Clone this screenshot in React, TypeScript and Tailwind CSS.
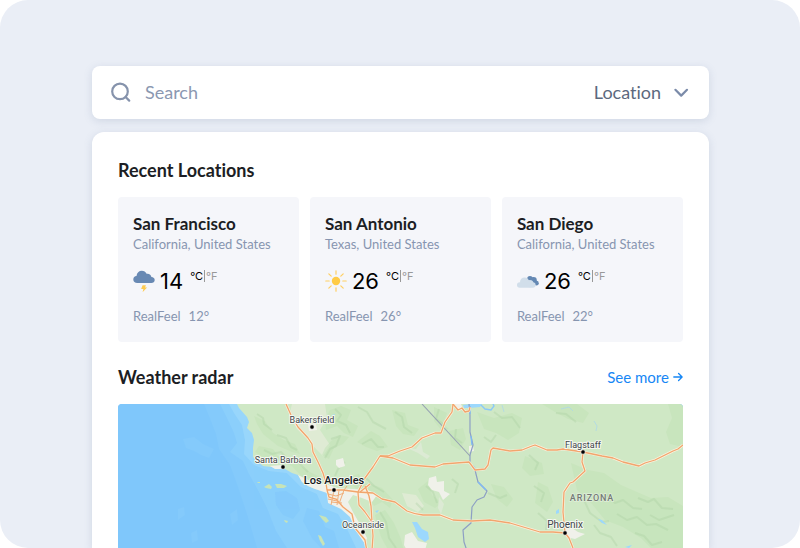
import React, { useState } from "react";

type Weather = "storm" | "sun" | "cloud";

const locations: { city: string; region: string; weather: Weather; temp: number; feel: number }[] = [
    { city: "San Francisco", region: "California, United States", weather: "storm", temp: 14, feel: 12 },
    { city: "San Antonio", region: "Texas, United States", weather: "sun", temp: 26, feel: 26 },
    { city: "San Diego", region: "California, United States", weather: "cloud", temp: 26, feel: 22 },
];

const roads = [
    "M168 0L173 11L180 23L190 34L194 40L195 48L200 58L205 69L208 79L209 86",
    "M209 86L225 86L240 88L255 89L264 95L277 98L289 107Q296 110 305 111L322 111L335 116L354 117L372 116L392 119L422 128L435 128L447 129",
    "M240 88L247 74L255 63L262 52L270 52L282 47L294 43L304 34L317 29L323 29L327 18L334 8L335 0",
    "M262 52L275 54L292 61L317 63L325 60L351 58L357 66L367 65L370 61L373 46L375 44L392 47L404 46L414 42L417 41L429 46L439 46L445 45L465 48L484 52L495 54L505 58L521 62L527 59L537 56L555 47L560 45L565 41",
    "M465 48L464 58L467 67L455 78L452 79L446 88L445 108L447 129L451 134L455 144L462 158",
    "M335 0L340 6L344 4L347 8L351 7L352 3",
    "M209 86L211 93L218 95L225 103L234 110L237 124L247 136L251 160",
    "M240 88L241 101L247 108L254 118L255 132L253 160",
    "M247 82L251 92L253 102L254 118",
    "M252 80L247 84L242 88",
];

const cityStreets = [
    "M210 90L218 92L226 89",
    "M213 98L224 99",
    "M216 86L213 101",
    "M221 86L219 101",
    "M226 86L221 100",
    "M210 95L219 97",
    "M226 86L229 82",
];

const hills = [
    "M136 12L147 17L155 29L166 36L177 40L182 50L174 48L160 42L145 30L139 20Z",
    "M141 42L155 45L160 52L177 58L190 67L202 73L205 82L194 78L184 73L174 62L159 56L146 54L137 48Z",
    "M212 6L223 2L233 6L229 16L240 22L235 33L226 29L219 22L208 26L207 16Z",
    "M213 37L222 31L231 33L225 40L216 44L211 55L204 51L207 44Z",
    "M239 38L253 27L262 32L270 43L259 47L248 43Z",
    "M229 73L241 70L245 79L253 80L264 84L275 96L272 104L264 98L256 102L249 91L237 84Z",
    "M257 111L267 106L276 119L283 135L287 152L273 151L263 133Z",
    "M274 6L287 9L290 21L301 25L296 32L285 30L278 22Z",
    "M316 3L329 9L325 20L331 25L324 27L316 17Z",
    "M331 27L345 24L348 35L342 46L333 41Z",
    "M359 8L376 14L394 9L404 14L401 29L390 36L378 29L366 25Z",
    "M424 0L459 0L471 9L465 19L450 15L437 8Z",
    "M453 59L470 66L486 69L503 81L519 88L533 94L550 93L565 102L565 150L537 148L523 134L505 123L487 116L474 100L459 86Z",
    "M420 78L430 83L435 98L429 108L417 99Z",
    "M550 0L565 0L565 43L552 40L548 28L554 14Z",
    "M407 52L424 59L426 70L412 72L404 64Z",
    "M373 80L386 83L395 95L389 103L379 95Z",
    "M300 85L310 77L314 91L324 99L317 104L306 98Z",
];

const ridges =
    "M139 10L145 14L146 20L154 26M159 31L168 34L173 43L179 46M146 46L154 50L163 48L171 57L181 59L190 68M217 5L223 11L219 17L228 21L232 29M213 35L222 32L218 42L212 45L207 54M240 3L249 8L255 18L268 25M227 58L220 65L217 72M244 40L253 35L260 43L266 43M229 74L239 78L249 75L256 82L266 88M262 108L268 118L271 134L278 144M277 8L284 13L286 23L294 29M321 5L318 15L327 21M338 25L337 34L344 39M376 8L384 14L394 13L402 24M366 33L373 38L378 31M308 82L315 88L319 99M298 99L305 106M334 75L340 80L337 89M370 89L382 94L389 91M411 51L420 59L417 66M438 9L448 10L458 18M416 82L426 89L423 98M420 109L429 117L428 126M457 91L466 96L472 109L484 118L491 117M484 96L490 91L497 99L505 96L515 104L524 105M520 94L530 98L536 95L544 104L555 105M499 110L509 116L519 113L529 121L538 120L550 126M532 111L541 116L556 111M476 121L482 129L493 133L499 142M517 129L526 132L534 141L544 138";

const places = [
    { name: "Bakersfield", x: 194, y: 23, labelY: 19, size: "text-[9px]" },
    { name: "Santa Barbara", x: 165, y: 63, labelY: 59, size: "text-[9px]" },
    { name: "Los Angeles", x: 216, y: 86, labelY: 80, size: "text-[11px] font-medium" },
    { name: "Oceanside", x: 245, y: 128, labelY: 124, size: "text-[9px]" },
    { name: "Flagstaff", x: 465, y: 48, labelY: 44, size: "text-[9px]" },
    { name: "Phoenix", x: 447, y: 129, labelY: 124, size: "text-[10px]" },
];

function WeatherIcon({ weather }: { weather: Weather }) {
    if (weather === "storm") {
        return (
            <svg viewBox="0 0 22 22" className="size-[22px]" aria-hidden="true">
                <path
                    d="M4.3 13C1.9 13 .3 11.6.3 9.5c0-1.9 1.3-3.2 3.2-3.4C3.8 2.8 6 .8 8.8.8c2.2 0 3.8 1 4.8 2.9 2.6-.4 4.5 1 4.8 3.3 2 .1 3.3 1.3 3.3 3 0 1.8-1.4 3-3.4 3Z"
                    fill="#6889b3"
                />
                <path d="M9.6 15.2h3.3l-.8 2.2h2l-4.5 4.8.8-3.3H8.1Z" fill="#fdcb52" />
            </svg>
        );
    }
    if (weather === "sun") {
        return (
            <svg viewBox="0 0 22 22" className="size-[22px]" aria-hidden="true">
                <circle cx="11" cy="11" r="4.2" fill="#ffcb45" />
                <path
                    d="M11 .8v3.4M11 17.8v3.4M.8 11h3.4M17.8 11h3.4M3.8 3.8l2.4 2.4M15.8 15.8l2.4 2.4M3.8 18.2l2.4-2.4M15.8 6.2l2.4-2.4"
                    stroke="#ffcf63"
                    strokeWidth="1.2"
                    strokeLinecap="round"
                />
            </svg>
        );
    }
    return (
        <svg viewBox="0 0 22 22" className="size-[22px]" aria-hidden="true">
            <g fill="#6488b3">
                <circle cx="13" cy="8.8" r="2.8" />
                <circle cx="16.6" cy="10.2" r="3.2" />
                <circle cx="19.4" cy="13.2" r="2.4" />
            </g>
            <g fill="#d1deea">
                <rect x="0" y="12.2" width="18.6" height="5.6" rx="2.8" />
                <circle cx="7.6" cy="12" r="4.6" />
                <circle cx="12.9" cy="13.6" r="3.6" />
            </g>
        </svg>
    );
}

function LocationCard({ city, region, weather, temp, feel }: (typeof locations)[number]) {
    const [unit, setUnit] = useState<"C" | "F">("C");
    const convert = (value: number) => (unit === "C" ? value : Math.round(value * 1.8 + 32));

    return (
        <article className="rounded bg-[#f5f6fa] px-[15px] py-4">
            <h3 className="text-[17px] leading-[22px] font-bold text-[#1c1e24]">{city}</h3>
            <p className="text-[13px] leading-[18px] whitespace-nowrap text-[#8795b0]">{region}</p>
            <div className="mt-[14px] flex h-7 items-center font-['Inter',sans-serif] text-black">
                <WeatherIcon weather={weather} />
                <span className="ml-[5px] text-[22px] leading-7">{convert(temp)}</span>
                <div className="mb-[10px] ml-[7px] flex items-center gap-px text-[11px] leading-3">
                    <button type="button" onClick={() => setUnit("C")} className={unit === "C" ? "" : "text-[#999]"}>
                        °C
                    </button>
                    <span className="h-3 w-px bg-[#999]"></span>
                    <button type="button" onClick={() => setUnit("F")} className={unit === "F" ? "" : "text-[#999]"}>
                        °F
                    </button>
                </div>
            </div>
            <p className="mt-[11px] flex gap-2 text-[13px] leading-5 text-[#8795b0]">
                <span>RealFeel</span>
                <span>{convert(feel)}°</span>
            </p>
        </article>
    );
}

function RadarMap() {
    return (
        <svg
            viewBox="0 0 565 144"
            preserveAspectRatio="xMinYMin slice"
            className="min-h-0 w-full flex-1 rounded-t bg-[#7fc7fc] font-['Roboto',sans-serif]"
            role="img"
            aria-label="Weather radar map"
        >
            {/* Ocean depth */}
            <rect width="565" height="300" fill="#7fc7fb" />
            <path d="M86 0L91 12L98 30L101 45L112 61L119 80L126 101L132 120L139 144L142 300L300 300L280 0Z" fill="#84cafb" />
            <path d="M102 0L109 14L116 29L119 39L112 48L125 57L131 70L140 86L149 104L158 127L169 144L240 150L220 60L150 0Z" fill="#8bcffb" />
            <path d="M111 0L116 9L124 21L127 36L126 50L136 61L151 67L169 69L183 83L199 90L205 104L220 110L230 127L241 150L270 150L260 0Z" fill="#98d6fb" />
            <path d="M157 88L168 87L179 94L182 106L175 115L165 111L158 101Z" fill="#85cbfb" />
            <path d="M189 104L201 107L207 123L216 127L221 144L203 144L194 134L185 117Z" fill="#85cbfb" />
            <path
                d="M65 35L76 33L85 40L96 45L91 54L83 51L76 47L68 44ZM60 105L66 103L67 111L60 116ZM112 110L119 105L120 116L114 121ZM73 129L79 126L80 136L74 139Z"
                fill="#84cafb"
            />

            {/* Land */}
            <path
                d="M119 0L121 4L129 13L131 18L129 24L134 29L136 36L135 44L135 53L140 58L145 62L162 64L167 65L174 69L180 71L184 78L190 82L197 85L207 86L210 91L210 98L217 101L224 104L229 108L234 116L237 124L245 134L249 144L252 300L565 300L565 0Z"
                fill="#cfe8c5"
            />
            <path d="M174 0L207 0L209 14L202 26L212 41L205 52L198 45L190 36L179 25L171 12ZM284 89L298 91L306 102L300 108L289 102Z" fill="#dfebd4" />
            <g fill="#bfe2b4" opacity="0.45">
                {hills.map((d) => (
                    <path key={d} d={d} />
                ))}
            </g>
            <path d={ridges} fill="none" stroke="#a9ce9e" strokeWidth="2" opacity="0.32" strokeLinejoin="round" />
            <g fill="#f0f1ea">
                <path d="M180 71L186 74L197 79L208 80L219 84L235 85L250 86L259 91L254 98L244 94L235 91L230 98L236 110L243 122L249 134L247 140L238 127L232 113L223 105L210 99L209 89L197 85L190 82L184 78Z" />
                <path d="M311 74L318 72L319 78L326 77L326 87L332 90L325 96L321 88L314 86L310 81Z" />
                <path d="M287 131L294 128L300 137L309 139L306 150L291 150L286 141Z" />
                <path d="M447 125L454 124L460 128L467 130L457 135L448 133Z" />
                <path d="M218 56L225 54L227 62L221 64L218 61ZM190 20L198 20L199 26L191 27ZM335 0L343 0L345 5L338 4ZM351 42L355 42L356 47L351 48ZM152 62L164 61L165 65L157 65Z" />
            </g>
            <path d="M289 44L298 45L303 38L305 48L312 52L309 55L300 49ZM321 93L326 100L323 110L320 104Z" fill="#dcead4" />
            <g fill="#c7e4b8">
                <path d="M146 83L151 80L154 83L153 85L148 84Z" />
                <path d="M157 80L163 80L169 82L166 84L159 84Z" />
                <path d="M201 111L208 113L211 117L208 119L204 115Z" />
                <path d="M200 131L203 132L207 140L205 142L202 137Z" />
                <path d="M139 78L142 78L142 79L140 79ZM166 116L170 117L169 119L167 118Z" />
            </g>

            {/* Lakes and rivers */}
            <g fill="#9cd8fd">
                <path d="M294 118L299 118L304 125L310 128L311 135L307 138L300 133L297 124Z" />
                <path d="M345 1L353 0L364 0L362 3L352 4L346 4ZM438 107L441 105L441 109L438 110ZM480 115L484 116L489 121L484 119Z" />
                <path d="M214 11L217 10L216 13L214 13ZM257 107L261 106L259 109ZM240 93L242 95L241 98L239 96ZM507 143L514 141L511 144Z" />
            </g>
            <path d="M363 1L367 5L373 6L376 2L375 0" fill="none" stroke="#8bc9f8" strokeWidth="1.4" />
            <path d="M384 1L386 8M476 17L479 22L478 27M443 5L451 3L455 7" fill="none" stroke="#a9d6ee" strokeWidth="0.7" />
            <g fill="none" strokeLinejoin="round">
                <path
                    d="M351 0L352 11L352 28L355 41L352 51L352 59L357 66L360 78L369 87L366 93L359 96L354 103L353 119L345 126L346 138L348 144L347 160"
                    stroke="#8d9fc4"
                    strokeWidth="1.2"
                />
                <path d="M352 2L352 10M353 32L354 41M355 62L358 66M360 78L368 86" stroke="#7fb9f4" strokeWidth="1.4" />
                <path d="M304 0L352 52" stroke="#96a1b3" strokeWidth="1.1" />
            </g>

            {/* Roads */}
            <g fill="none" strokeLinejoin="round">
                {roads.map((d) => (
                    <path key={d} d={d} stroke="#fbf0dc" strokeWidth="2.6" />
                ))}
                {roads.map((d) => (
                    <path key={d} d={d} stroke="#f1a56d" strokeWidth="1.3" />
                ))}
                {cityStreets.map((d) => (
                    <path key={d} d={d} stroke="#f1ae78" strokeWidth="1" />
                ))}
            </g>

            {/* Places */}
            {places.map((place) => (
                <g key={place.name}>
                    <circle cx={place.x} cy={place.y} r="2.2" fill="#000" stroke="#fff" strokeWidth="0.6" />
                    <text
                        x={place.x}
                        y={place.labelY}
                        textAnchor="middle"
                        className={place.size}
                        fill={place.name === "Los Angeles" ? "#16191d" : "#414549"}
                        stroke="#f5f8f1"
                        strokeWidth="2"
                        strokeLinejoin="round"
                        paintOrder="stroke"
                    >
                        {place.name}
                    </text>
                </g>
            ))}
            <text
                x="474"
                y="97"
                textAnchor="middle"
                className="text-[9px] font-medium tracking-widest"
                fill="#747b76"
                stroke="#dfeed9"
                strokeWidth="1.5"
                paintOrder="stroke"
            >
                ARIZONA
            </text>
        </svg>
    );
}

function App() {
    const [query, setQuery] = useState("");

    return (
        <div className="h-screen bg-white font-['Lato',sans-serif] [font-variant-ligatures:none]">
            <div className="flex h-full flex-col gap-[13px] overflow-hidden rounded-[28px] bg-[#eaeef6] pt-[66px] pr-[11.4%] pl-[11.5%]">
                {/* Search bar */}
                <form
                    onSubmit={(e) => e.preventDefault()}
                    className="flex h-[53px] shrink-0 items-center rounded-lg bg-white px-[19px] pb-0.5 shadow-[0_2px_8px_rgba(90,110,150,0.18)]"
                >
                    <label htmlFor="search" className="shrink-0">
                        <svg viewBox="0 0 20 20" className="size-5" fill="none" stroke="#8693ac" strokeWidth="2.2" aria-label="Search">
                            <circle cx="9" cy="9.4" r="7.8" />
                            <path d="M14.6 15l3.6 3.6" strokeLinecap="round" />
                        </svg>
                    </label>
                    <input
                        id="search"
                        type="text"
                        value={query}
                        onChange={(e) => setQuery(e.target.value)}
                        placeholder="Search"
                        className="ml-[14px] min-w-0 flex-1 text-lg leading-6 text-[#5c697e] placeholder:text-[#8b98b1] focus:outline-none"
                    />
                    <div className="grid items-center">
                        <select
                            aria-label="Location"
                            className="col-start-1 row-start-1 appearance-none bg-transparent pr-[28px] text-lg leading-6 text-[#5c697e] focus:outline-none"
                        >
                            <option>Location</option>
                        </select>
                        <svg
                            viewBox="0 0 16 16"
                            className="pointer-events-none col-start-1 row-start-1 mr-px size-4 justify-self-end"
                            fill="none"
                            stroke="#7b8ba9"
                            strokeWidth="2.2"
                            strokeLinecap="round"
                            strokeLinejoin="round"
                            aria-hidden="true"
                        >
                            <path d="M2.4 5.8L8.2 11.6L14 5.8" />
                        </svg>
                    </div>
                </form>

                {/* Main Content */}
                <main className="flex min-h-0 flex-1 flex-col rounded-t-xl bg-white px-[26px] pt-[26px] shadow-[0_2px_8px_rgba(90,110,150,0.18)]">
                    <h2 className="text-lg leading-6 font-bold text-[#1c1e24]">Recent Locations</h2>
                    <section className="mt-[15px] grid grid-cols-3 gap-[11px]">
                        {locations.map((location) => (
                            <LocationCard key={location.city} {...location} />
                        ))}
                    </section>

                    <div className="mt-[23px] mb-[15px] flex items-center justify-between">
                        <h2 className="text-lg leading-6 font-bold text-[#1c1e24]">Weather radar</h2>
                        <a href="#radar" className="flex items-center gap-1 text-[15px] leading-6 text-[#1787f5]">
                            See more
                            <svg
                                viewBox="0 0 10 10"
                                className="size-[10px]"
                                fill="none"
                                stroke="currentColor"
                                strokeWidth="1.3"
                                strokeLinecap="round"
                                strokeLinejoin="round"
                                aria-hidden="true"
                            >
                                <path d="M.8 5h8M5.6 1.5L9.1 5L5.6 8.5" />
                            </svg>
                        </a>
                    </div>
                    <RadarMap />
                </main>
            </div>
        </div>
    );
}

export default App;
